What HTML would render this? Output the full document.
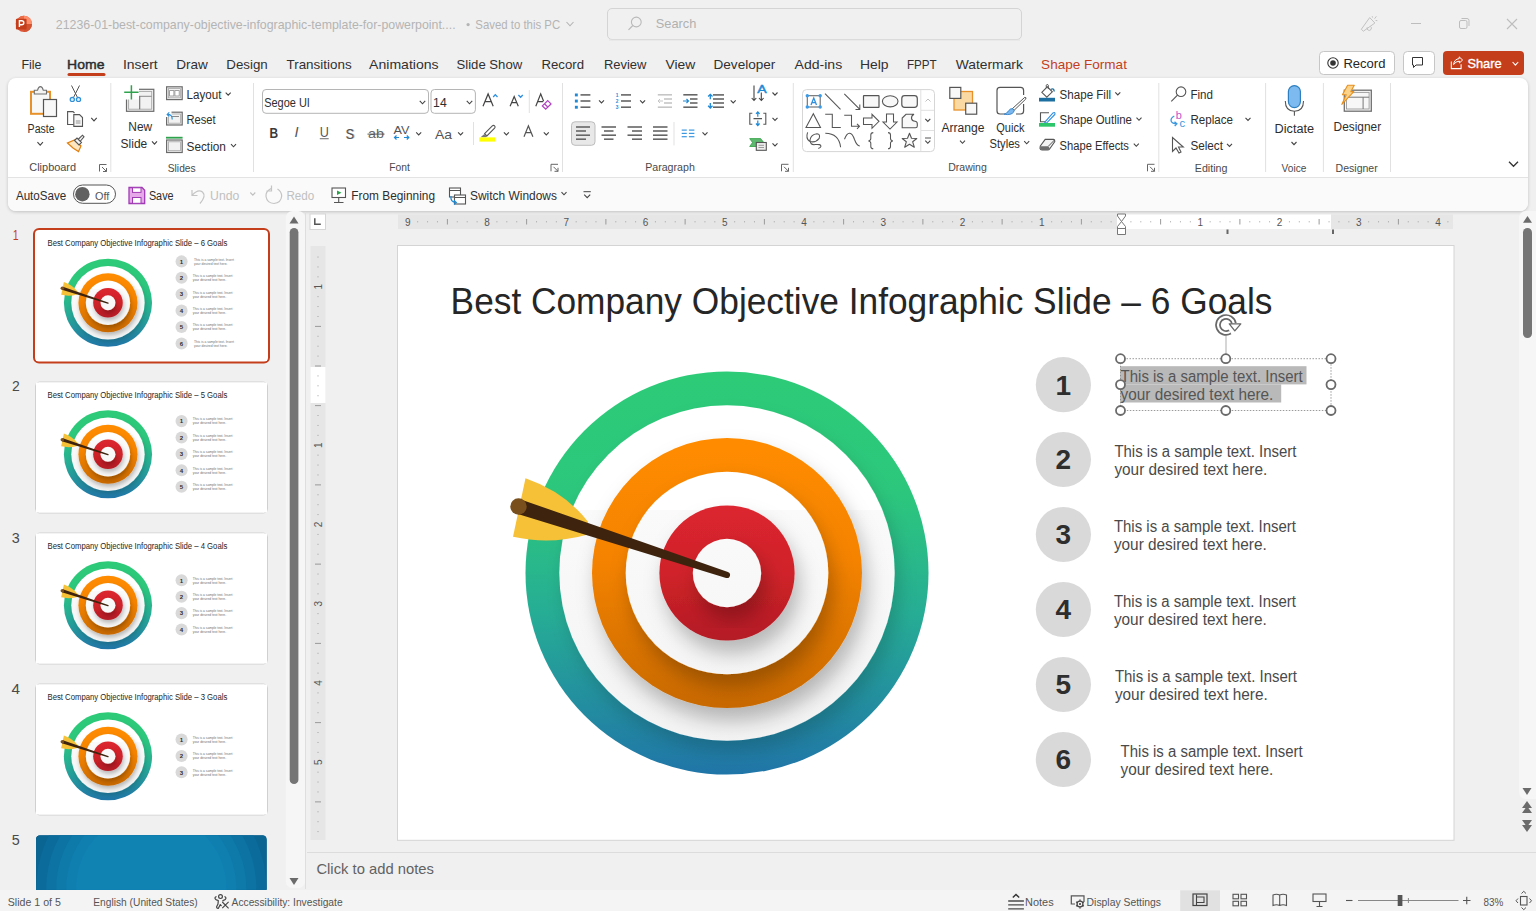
<!DOCTYPE html>
<html><head><meta charset="utf-8">
<style>
*{margin:0;padding:0;box-sizing:border-box}
html,body{width:1536px;height:911px;overflow:hidden;background:#f0f0f0;font-family:"Liberation Sans", sans-serif;color:#262626}
.a{position:absolute}
svg.full{position:absolute;left:0;top:0}
text{font-family:"Liberation Sans", sans-serif}
</style></head><body>
<div class="a" style="left:8px;top:78px;width:1520px;height:133px;border-radius:8px;background:#fff;box-shadow:0 1px 3.5px rgba(0,0,0,0.2)"></div>
<div class="a" style="left:8px;top:177px;width:1520px;height:34px;border-radius:0 0 8px 8px;background:#fafafa;border-top:1px solid #e3e3e3"></div>
<svg class="full" width="1536" height="911" viewBox="0 0 1536 911">
<g>
  <circle cx="23.9" cy="23.9" r="8.1" fill="#e0583a"/>
  <path d="M23.9 15.8 A8.1 8.1 0 0 1 32 23.9 L23.9 23.9Z" fill="#ff8f6b"/>
  <path d="M23.9 23.9 L32 23.9 A8.1 8.1 0 0 1 23.9 32Z" fill="#d35230"/>
  <path d="M23.9 15.8 A8.1 8.1 0 0 0 15.8 23.9 L23.9 23.9Z" fill="#ed6c47"/>
  <rect x="15.9" y="18.7" width="10.7" height="10.7" rx="1" fill="#c43e1c"/>
  <path d="M19.4 27 V20.8 H21.6 Q23.8 20.8 23.8 22.8 Q23.8 24.8 21.6 24.8 H19.4" fill="none" stroke="#fff" stroke-width="1.4"/>
</g>
<text x="55.85" y="28.6" font-size="12.2" fill="#b4b4b4" font-weight="normal" textLength="399.75" lengthAdjust="spacingAndGlyphs" >21236-01-best-company-objective-infographic-template-for-powerpoint....</text>
<circle cx="468.1" cy="24.6" r="1.6" fill="#b4b4b4"/>
<text x="475.30" y="28.6" font-size="12.2" fill="#b4b4b4" font-weight="normal" textLength="84.90" lengthAdjust="spacingAndGlyphs" >Saved to this PC</text>
<path d="M566.50 22.00 L570.00 25.80 L573.50 22.00" fill="none" stroke="#b4b4b4" stroke-width="1.1"/>
<rect x="607.5" y="8.5" width="414" height="31" rx="4.5" fill="#f0f0f0" stroke="#d4d4d4" stroke-width="1"/>
<line x1="609" y1="40" x2="1020" y2="40" stroke="#e2e2e2" stroke-width="1"/>
<circle cx="636.3" cy="22" r="4.9" fill="none" stroke="#b9b9b9" stroke-width="1.1"/><path d="M632.8 25.5 L628.5 29.8" stroke="#b9b9b9" stroke-width="1.2"/>
<text x="655.80" y="27.7" font-size="13.6" fill="#b0b0b0" font-weight="normal" textLength="40.60" lengthAdjust="spacingAndGlyphs" >Search</text>
<path d="M1369.7 17.6 L1374.9 23 L1363.4 31.2 L1361.3 29.3 Z" fill="none" stroke="#c2c2c2" stroke-width="1" stroke-linejoin="round"/><path d="M1367.2 27.3 A2.2 2.2 0 1 0 1370.6 26.5" fill="none" stroke="#c2c2c2" stroke-width="1"/><path d="M1372.2 16.2 L1372.6 17.6 M1374.6 18.7 L1376.4 16.3 M1375.6 20.5 L1377.3 20.6" stroke="#c2c2c2" stroke-width="1"/>
<line x1="1411" y1="23.5" x2="1421" y2="23.5" stroke="#bdbdbd" stroke-width="1"/>
<rect x="1459.5" y="20.5" width="7.5" height="8" rx="1.5" fill="none" stroke="#bdbdbd"/><path d="M1461.5 18.5 H1467 A2 2 0 0 1 1469 20.5 V26" fill="none" stroke="#bdbdbd"/>
<path d="M1507 19 L1517 29 M1517 19 L1507 29" stroke="#bdbdbd" stroke-width="1.1"/>
<text x="21.40" y="68.8" font-size="13.2" fill="#303030" font-weight="normal" textLength="20.10" lengthAdjust="spacingAndGlyphs" >File</text>
<text x="67.10" y="68.8" font-size="13.2" fill="#303030" font-weight="normal" textLength="37.40" lengthAdjust="spacingAndGlyphs" stroke="#2a2a2a" stroke-width="0.45">Home</text>
<text x="123.00" y="68.8" font-size="13.2" fill="#303030" font-weight="normal" textLength="34.70" lengthAdjust="spacingAndGlyphs" >Insert</text>
<text x="176.20" y="68.8" font-size="13.2" fill="#303030" font-weight="normal" textLength="31.60" lengthAdjust="spacingAndGlyphs" >Draw</text>
<text x="226.30" y="68.8" font-size="13.2" fill="#303030" font-weight="normal" textLength="41.40" lengthAdjust="spacingAndGlyphs" >Design</text>
<text x="286.50" y="68.8" font-size="13.2" fill="#303030" font-weight="normal" textLength="65.10" lengthAdjust="spacingAndGlyphs" >Transitions</text>
<text x="369.10" y="68.8" font-size="13.2" fill="#303030" font-weight="normal" textLength="69.50" lengthAdjust="spacingAndGlyphs" >Animations</text>
<text x="456.50" y="68.8" font-size="13.2" fill="#303030" font-weight="normal" textLength="65.70" lengthAdjust="spacingAndGlyphs" >Slide Show</text>
<text x="541.50" y="68.8" font-size="13.2" fill="#303030" font-weight="normal" textLength="42.50" lengthAdjust="spacingAndGlyphs" >Record</text>
<text x="603.90" y="68.8" font-size="13.2" fill="#303030" font-weight="normal" textLength="42.50" lengthAdjust="spacingAndGlyphs" >Review</text>
<text x="665.40" y="68.8" font-size="13.2" fill="#303030" font-weight="normal" textLength="29.80" lengthAdjust="spacingAndGlyphs" >View</text>
<text x="713.50" y="68.8" font-size="13.2" fill="#303030" font-weight="normal" textLength="61.90" lengthAdjust="spacingAndGlyphs" >Developer</text>
<text x="794.50" y="68.8" font-size="13.2" fill="#303030" font-weight="normal" textLength="47.70" lengthAdjust="spacingAndGlyphs" >Add-ins</text>
<text x="860.00" y="68.8" font-size="13.2" fill="#303030" font-weight="normal" textLength="28.60" lengthAdjust="spacingAndGlyphs" >Help</text>
<text x="906.90" y="68.8" font-size="13.2" fill="#303030" font-weight="normal" textLength="29.80" lengthAdjust="spacingAndGlyphs" >FPPT</text>
<text x="955.70" y="68.8" font-size="13.2" fill="#303030" font-weight="normal" textLength="67.20" lengthAdjust="spacingAndGlyphs" >Watermark</text>
<text x="1041.10" y="68.8" font-size="13.2" fill="#c43e1c" font-weight="normal" textLength="85.80" lengthAdjust="spacingAndGlyphs" >Shape Format</text>
<rect x="67.5" y="73" width="38" height="3" rx="1.5" fill="#c43e1c"/>
<rect x="1319.5" y="51.5" width="75" height="23" rx="4" fill="#fff" stroke="#c6c6c6"/>
<circle cx="1333" cy="63" r="5.2" fill="none" stroke="#333" stroke-width="1.1"/><circle cx="1333" cy="63" r="2.8" fill="#333"/>
<text x="1343.40" y="67.7" font-size="13.2" fill="#262626" font-weight="normal" textLength="42.00" lengthAdjust="spacingAndGlyphs" >Record</text>
<rect x="1403.5" y="51.5" width="31" height="23" rx="4" fill="#fff" stroke="#c6c6c6"/>
<path d="M1412.5 57.5 H1422.5 V65 H1416 L1413.5 67.5 V65 H1412.5 Z" fill="none" stroke="#333" stroke-width="1"/>
<rect x="1443" y="51" width="81" height="24" rx="4" fill="#c43e1c"/>
<path d="M1451.3 61.5 V68.6 H1461.1 V64.3" fill="none" stroke="#fff" stroke-width="1.05"/><path d="M1453.6 64.6 Q1454.2 59.2 1459.2 58.6 V56.9 L1462.6 60 L1459.4 63 V61.1 Q1455.8 61.2 1453.6 64.6 Z" fill="none" stroke="#fff" stroke-width="1" stroke-linejoin="round"/>
<text x="1467.40" y="67.8" font-size="13.4" fill="#fff" font-weight="normal" textLength="34.20" lengthAdjust="spacingAndGlyphs" stroke="#fff" stroke-width="0.35">Share</text>
<path d="M1512.60 62.00 L1515.40 65.20 L1518.20 62.00" fill="none" stroke="#fff" stroke-width="1.1"/>
<line x1="110.8" y1="83" x2="110.8" y2="172" stroke="#e1e1e1" stroke-width="1"/>
<line x1="253.5" y1="83" x2="253.5" y2="172" stroke="#e1e1e1" stroke-width="1"/>
<line x1="562.5" y1="83" x2="562.5" y2="172" stroke="#e1e1e1" stroke-width="1"/>
<line x1="793.3" y1="83" x2="793.3" y2="172" stroke="#e1e1e1" stroke-width="1"/>
<line x1="1158.8" y1="83" x2="1158.8" y2="172" stroke="#e1e1e1" stroke-width="1"/>
<line x1="1265.6" y1="83" x2="1265.6" y2="172" stroke="#e1e1e1" stroke-width="1"/>
<line x1="1323.4" y1="83" x2="1323.4" y2="172" stroke="#e1e1e1" stroke-width="1"/>
<line x1="1390.5" y1="83" x2="1390.5" y2="172" stroke="#e1e1e1" stroke-width="1"/>
<rect x="31" y="91.8" width="19" height="22" fill="#f8f8f8" stroke="#e8912a" stroke-width="2"/>
<path d="M34.3 94 V90.3 H37.5 Q38.5 86.6 40.4 86.6 Q42.3 86.6 43.3 90.3 H46.5 V94 Z" fill="#f4f4f4" stroke="#707070" stroke-width="1.1"/>
<rect x="43.5" y="99.5" width="13" height="17" fill="#f8f8f8" stroke="#555" stroke-width="1.2"/>
<text x="27.60" y="133.3" font-size="12.3" fill="#2e2e2e" font-weight="normal" textLength="27.00" lengthAdjust="spacingAndGlyphs" >Paste</text>
<path d="M37.45 142.10 L40.20 145.10 L42.95 142.10" fill="none" stroke="#444" stroke-width="1.1"/>
<path d="M71.5 85.5 L77.5 97.5 M79.5 85.5 L73.5 97.5" stroke="#555" stroke-width="1"/><circle cx="72.3" cy="99.4" r="2.1" fill="#d7ecfa" stroke="#2f8fd8" stroke-width="1.2"/><circle cx="78.5" cy="99.4" r="2.1" fill="#d7ecfa" stroke="#2f8fd8" stroke-width="1.2"/>
<path d="M73.7 124.5 H67.6 V111.6 H73 L74.5 113" fill="none" stroke="#555" stroke-width="1.1"/><path d="M73.8 114.6 H79.5 L82.5 117.6 V126.4 H73.8 Z" fill="#f8f8f8" stroke="#555" stroke-width="1.1"/><path d="M75.8 121 H80.5 M75.8 123 H80.5" stroke="#777" stroke-width="0.8"/>
<path d="M91.25 117.90 L94.00 120.90 L96.75 117.90" fill="none" stroke="#444" stroke-width="1.1"/>
<path d="M67.5 143 L73 148 L78.5 151.5 L81 146 L74.5 140 Z" fill="#fde6c0" stroke="#e07f0f" stroke-width="1.2"/><path d="M74.5 140.5 L77 138 L81.5 142.5 L79 145 Z M78.5 139 L82.5 135.2 L84 136.8 L80.5 141" fill="#f4f4f4" stroke="#555" stroke-width="1.1"/>
<text x="29.30" y="171.4" font-size="11" fill="#4a4a4a" font-weight="normal" textLength="46.80" lengthAdjust="spacingAndGlyphs" >Clipboard</text>
<path d="M99.5 171.5 V164.5 H106.5" fill="none" stroke="#666" stroke-width="1"/><path d="M102.0 167.0 L106.5 171.5 M103.0 171.5 H106.5 V168.0" fill="none" stroke="#666" stroke-width="1"/>
<rect x="126.5" y="89.3" width="27.3" height="22" fill="#f2f2f2" stroke="#6b6b6b" stroke-width="1.2"/><rect x="128.6" y="91.4" width="23.1" height="17.8" fill="none" stroke="#a6a6a6" stroke-width="0.9"/><path d="M128.6 96.3 H151.7" stroke="#8a8a8a" stroke-width="1"/><path d="M139.7 96.3 V109.2" stroke="#6b6b6b" stroke-width="1.1"/>
<rect x="123" y="84" width="16" height="15.5" fill="#fff"/><path d="M124.2 92.3 H138.6 M131.4 85.2 V99.5" stroke="#2ea24c" stroke-width="1.5"/>
<text x="128.30" y="131.2" font-size="12.3" fill="#2e2e2e" font-weight="normal" textLength="23.80" lengthAdjust="spacingAndGlyphs" >New</text>
<text x="120.60" y="147.7" font-size="12.3" fill="#2e2e2e" font-weight="normal" textLength="26.60" lengthAdjust="spacingAndGlyphs" >Slide</text>
<path d="M152.00 141.40 L154.50 144.20 L157.00 141.40" fill="none" stroke="#444" stroke-width="1.1"/>
<rect x="166.6" y="86.8" width="15.6" height="12.8" fill="#f2f2f2" stroke="#6b6b6b" stroke-width="1.2"/><rect x="168.4" y="88.6" width="12" height="9.2" fill="none" stroke="#a6a6a6" stroke-width="0.8"/><rect x="169.6" y="90.6" width="4.3" height="5.4" fill="#fff" stroke="#8a8a8a" stroke-width="0.8"/><rect x="174.9" y="90.6" width="4.3" height="5.4" fill="#fff" stroke="#8a8a8a" stroke-width="0.8"/>
<text x="186.50" y="98.8" font-size="12.3" fill="#2e2e2e" font-weight="normal" textLength="34.90" lengthAdjust="spacingAndGlyphs" >Layout</text>
<path d="M225.70 92.60 L228.20 95.20 L230.70 92.60" fill="none" stroke="#444" stroke-width="1.1"/>
<rect x="166.6" y="112.2" width="15.6" height="12.8" fill="#f2f2f2" stroke="#6b6b6b" stroke-width="1.2"/><rect x="168.4" y="114" width="12" height="9.2" fill="none" stroke="#a6a6a6" stroke-width="0.8"/><path d="M172 116.5 H179" stroke="#8a8a8a" stroke-width="1"/>
<rect x="165" y="110" width="6.5" height="7" fill="#fff"/><path d="M172.2 119.4 Q172.4 114.2 167.3 114.4 M169.3 112.3 L167.2 114.4 L169.3 116.5" fill="none" stroke="#2f8fd8" stroke-width="1.2"/>
<text x="186.50" y="124.1" font-size="12.3" fill="#2e2e2e" font-weight="normal" textLength="29.10" lengthAdjust="spacingAndGlyphs" >Reset</text>
<rect x="166.6" y="140" width="15.6" height="12.5" fill="#f2f2f2" stroke="#6b6b6b" stroke-width="1.2"/><rect x="168.4" y="141.8" width="12" height="8.9" fill="none" stroke="#a6a6a6" stroke-width="0.8"/><rect x="166" y="136.8" width="16.6" height="1.8" fill="#2ea24c"/>
<text x="186.50" y="150.5" font-size="12.3" fill="#2e2e2e" font-weight="normal" textLength="39.40" lengthAdjust="spacingAndGlyphs" >Section</text>
<path d="M231.00 144.20 L233.50 146.80 L236.00 144.20" fill="none" stroke="#444" stroke-width="1.1"/>
<text x="167.80" y="171.7" font-size="11" fill="#4a4a4a" font-weight="normal" textLength="27.80" lengthAdjust="spacingAndGlyphs" >Slides</text>
<rect x="262.5" y="89.5" width="166" height="23.8" rx="3.5" fill="#fff" stroke="#b5b5b5" stroke-width="1"/>
<text x="264.20" y="107.2" font-size="12.3" fill="#2e2e2e" font-weight="normal" textLength="45.70" lengthAdjust="spacingAndGlyphs" >Segoe UI</text>
<path d="M419.75 100.80 L422.50 103.80 L425.25 100.80" fill="none" stroke="#444" stroke-width="1.1"/>
<rect x="431" y="89.5" width="44.4" height="23.8" rx="3.5" fill="#fff" stroke="#b5b5b5" stroke-width="1"/>
<text x="433.10" y="107.2" font-size="12.3" fill="#2e2e2e" font-weight="normal" textLength="13.60" lengthAdjust="spacingAndGlyphs" >14</text>
<path d="M466.75 100.80 L469.50 103.80 L472.25 100.80" fill="none" stroke="#444" stroke-width="1.1"/>
<path d="M483 106.3 L488.1 93.9 L493.2 106.3 M484.9 101.6 H491.3" fill="none" stroke="#444" stroke-width="1.2"/><path d="M493.2 97 L495.3 94.6 L497.5 97" fill="none" stroke="#2f8fe0" stroke-width="1.3"/>
<path d="M510.1 106.3 L514.2 96.5 L518.3 106.3 M511.6 102.7 H516.8" fill="none" stroke="#444" stroke-width="1.2"/><path d="M518.4 95 L520.6 97.3 L522.8 95" fill="none" stroke="#2f8fe0" stroke-width="1.3"/>
<line x1="529.3" y1="90" x2="529.3" y2="113" stroke="#e1e1e1" stroke-width="1"/>
<path d="M535.8 106.3 L540.7 93.9 L543.6 101.3 M537.6 101.7 H543.2" fill="none" stroke="#444" stroke-width="1.2"/><path d="M542.4 105.9 L547.7 100.6 L551 103.9 L545.7 109.2 Z M544.5 103.8 L547.8 107.1" fill="#fff" stroke="#b146c2" stroke-width="1.3"/>
<text x="269.40" y="137.6" font-size="14.2" fill="#3a3a3a" font-weight="bold" textLength="8.60" lengthAdjust="spacingAndGlyphs" >B</text>
<text x="294.5" y="137.3" font-size="14.5" fill="#555" font-style="italic" font-family="Liberation Serif">I</text>
<text x="319.70" y="137.3" font-size="13.8" fill="#555" font-weight="normal" textLength="9.10" lengthAdjust="spacingAndGlyphs" >U</text>
<line x1="319.8" y1="138.7" x2="328.7" y2="138.7" stroke="#777" stroke-width="1.1"/>
<text x="346.40" y="139.1" font-size="14.5" fill="#bbb" font-weight="normal" textLength="8.60" lengthAdjust="spacingAndGlyphs" >S</text>
<text x="345.60" y="138.5" font-size="14.5" fill="#555" font-weight="normal" textLength="8.60" lengthAdjust="spacingAndGlyphs" >S</text>
<text x="367.90" y="138.3" font-size="13.2" fill="#666" font-weight="normal" textLength="16.00" lengthAdjust="spacingAndGlyphs" >ab</text>
<line x1="367.5" y1="134.1" x2="384.5" y2="134.1" stroke="#555" stroke-width="1"/>
<text x="393.40" y="134.2" font-size="11.8" fill="#555" font-weight="normal" textLength="16.00" lengthAdjust="spacingAndGlyphs" >AV</text>
<path d="M394.5 137.5 H399 M404 137.5 H408.8 M396.5 135.5 L394.5 137.5 L396.5 139.5 M406.8 135.5 L408.8 137.5 L406.8 139.5" fill="none" stroke="#1e8ad6" stroke-width="1.2"/>
<path d="M416.20 132.30 L418.70 134.90 L421.20 132.30" fill="none" stroke="#444" stroke-width="1.1"/>
<text x="435.00" y="138.5" font-size="13.5" fill="#555" font-weight="normal" textLength="17.10" lengthAdjust="spacingAndGlyphs" >Aa</text>
<path d="M458.10 132.30 L460.60 134.90 L463.10 132.30" fill="none" stroke="#444" stroke-width="1.1"/>
<line x1="473.5" y1="122" x2="473.5" y2="145" stroke="#e1e1e1" stroke-width="1"/>
<path d="M484.6 133.6 L492.3 125.9 Q493.5 124.8 494.6 125.9 Q495.7 127 494.6 128.2 L486.9 135.9 Z" fill="#fff" stroke="#555" stroke-width="1.1"/><path d="M484.3 133.9 L487.2 136.2 L485.6 137.3 H480.6 Z" fill="#777"/>
<rect x="479.3" y="137.4" width="15.8" height="4.2" fill="#ffff00"/>
<path d="M503.90 132.30 L506.40 134.90 L508.90 132.30" fill="none" stroke="#444" stroke-width="1.1"/>
<path d="M524 136.8 L528.4 125.9 L532.9 136.8 M525.6 132.7 H531.2" fill="none" stroke="#555" stroke-width="1.2"/>
<path d="M543.80 132.30 L546.30 134.90 L548.80 132.30" fill="none" stroke="#444" stroke-width="1.1"/>
<text x="389.20" y="171.1" font-size="11" fill="#4a4a4a" font-weight="normal" textLength="20.60" lengthAdjust="spacingAndGlyphs" >Font</text>
<path d="M551 171.3 V164.3 H558" fill="none" stroke="#666" stroke-width="1"/><path d="M553.5 166.8 L558 171.3 M554.5 171.3 H558 V167.8" fill="none" stroke="#666" stroke-width="1"/>
<g fill="#1e8ad6"><rect x="574.9" y="93.5" width="2.9" height="2.9"/><rect x="574.9" y="99.6" width="2.9" height="2.9"/><rect x="574.9" y="105.8" width="2.9" height="2.9"/></g>
<line x1="580.5" y1="94.9" x2="590.4" y2="94.9" stroke="#666" stroke-width="1.6"/><line x1="580.5" y1="101" x2="590.4" y2="101" stroke="#666" stroke-width="1.6"/><line x1="580.5" y1="107.2" x2="590.4" y2="107.2" stroke="#666" stroke-width="1.6"/>
<path d="M599.00 100.30 L601.50 102.90 L604.00 100.30" fill="none" stroke="#444" stroke-width="1.1"/>
<g font-size="4.8" fill="#1e8ad6" font-weight="bold"><text x="615.8" y="97">1</text><text x="615.8" y="103">2</text><text x="615.8" y="109">3</text></g>
<line x1="621" y1="94.9" x2="631" y2="94.9" stroke="#666" stroke-width="1.6"/><line x1="621" y1="101" x2="631" y2="101" stroke="#666" stroke-width="1.6"/><line x1="621" y1="107.2" x2="631" y2="107.2" stroke="#666" stroke-width="1.6"/>
<path d="M640.10 100.30 L642.60 102.90 L645.10 100.30" fill="none" stroke="#444" stroke-width="1.1"/>
<line x1="657.8" y1="94.8" x2="672" y2="94.8" stroke="#c6c6c6" stroke-width="1.6"/><line x1="657.8" y1="107.2" x2="672" y2="107.2" stroke="#c6c6c6" stroke-width="1.6"/><line x1="664" y1="99" x2="672" y2="99" stroke="#c6c6c6" stroke-width="1.6"/><line x1="664" y1="103" x2="672" y2="103" stroke="#c6c6c6" stroke-width="1.6"/>
<path d="M663 101 H658 M660 99 L658 101 L660 103" fill="none" stroke="#c6c6c6" stroke-width="1"/>
<line x1="683.3" y1="94.8" x2="697.5" y2="94.8" stroke="#666" stroke-width="1.6"/><line x1="683.3" y1="107.2" x2="697.5" y2="107.2" stroke="#666" stroke-width="1.6"/><line x1="690" y1="99" x2="697.5" y2="99" stroke="#666" stroke-width="1.6"/><line x1="690" y1="103" x2="697.5" y2="103" stroke="#666" stroke-width="1.6"/>
<path d="M683 101 H688.5 M686.5 99 L688.5 101 L686.5 103" fill="none" stroke="#1e8ad6" stroke-width="1.2"/>
<line x1="713" y1="94.9" x2="724" y2="94.9" stroke="#666" stroke-width="1.6"/><line x1="713" y1="99" x2="724" y2="99" stroke="#666" stroke-width="1.6"/><line x1="713" y1="103" x2="724" y2="103" stroke="#666" stroke-width="1.6"/><line x1="713" y1="107.2" x2="724" y2="107.2" stroke="#666" stroke-width="1.6"/>
<path d="M710.3 94.3 V99.3 M710.3 103 V108 M708.1 96.5 L710.3 94.3 L712.5 96.5 M708.1 105.8 L710.3 108 L712.5 105.8" fill="none" stroke="#1e8ad6" stroke-width="1.3"/>
<path d="M730.70 100.30 L733.20 102.90 L735.70 100.30" fill="none" stroke="#444" stroke-width="1.1"/>
<path d="M754 85.5 V100.5 M751.7 98 L754 100.5 L756.3 98 M761.3 92.5 V100.5 M759 98 L761.3 100.5 L763.6 98" fill="none" stroke="#444" stroke-width="1.1"/>
<text x="757.20" y="92.8" font-size="10" fill="#1e8ad6" font-weight="normal" textLength="9.40" lengthAdjust="spacingAndGlyphs" stroke="#1e8ad6" stroke-width="0.4">A</text>
<path d="M772.50 92.50 L775.00 95.10 L777.50 92.50" fill="none" stroke="#444" stroke-width="1.1"/>
<path d="M752.3 113.2 H749.8 V124.3 H752.3 M763.3 113.2 H765.8 V124.3 H763.3 M753.5 118.6 H762" fill="none" stroke="#555" stroke-width="1.1"/><path d="M757.8 111.8 V116.8 M757.8 120.4 V125.5 M756 113.8 L757.8 111.8 L759.6 113.8 M756 123.5 L757.8 125.5 L759.6 123.5" fill="none" stroke="#1e8ad6" stroke-width="1.2"/>
<path d="M772.50 117.80 L775.00 120.40 L777.50 117.80" fill="none" stroke="#444" stroke-width="1.1"/>
<path d="M749.7 138.6 H760.6 L764 142.8 L760.6 146.5 H749.7 L752.5 142.5 Z" fill="#5fb86f" stroke="#2ea043" stroke-width="0.8"/><rect x="756.3" y="142.5" width="10" height="7.8" fill="#eee" stroke="#555" stroke-width="1.1"/><path d="M758.5 145.3 H764 M758.5 147.5 H764" stroke="#777" stroke-width="0.7"/>
<path d="M772.50 143.40 L775.00 146.00 L777.50 143.40" fill="none" stroke="#444" stroke-width="1.1"/>
<rect x="571.5" y="121.8" width="23.5" height="23.5" rx="3.5" fill="#e8e8e8" stroke="#bdbdbd" stroke-width="1"/>
<line x1="576" y1="127" x2="590" y2="127" stroke="#666" stroke-width="1.6"/><line x1="576" y1="135.2" x2="590" y2="135.2" stroke="#666" stroke-width="1.6"/><line x1="576" y1="131" x2="586" y2="131" stroke="#666" stroke-width="1.6"/><line x1="576" y1="139.2" x2="586" y2="139.2" stroke="#666" stroke-width="1.6"/>
<line x1="601.5" y1="127" x2="616" y2="127" stroke="#666" stroke-width="1.6"/><line x1="601.5" y1="135.2" x2="616" y2="135.2" stroke="#666" stroke-width="1.6"/><line x1="604" y1="131" x2="613.5" y2="131" stroke="#666" stroke-width="1.6"/><line x1="604" y1="139.2" x2="613.5" y2="139.2" stroke="#666" stroke-width="1.6"/>
<line x1="627.5" y1="127" x2="642" y2="127" stroke="#666" stroke-width="1.6"/><line x1="627.5" y1="135.2" x2="642" y2="135.2" stroke="#666" stroke-width="1.6"/><line x1="632" y1="131" x2="642" y2="131" stroke="#666" stroke-width="1.6"/><line x1="632" y1="139.2" x2="642" y2="139.2" stroke="#666" stroke-width="1.6"/>
<line x1="653" y1="127" x2="667.5" y2="127" stroke="#666" stroke-width="1.6"/><line x1="653" y1="131" x2="667.5" y2="131" stroke="#666" stroke-width="1.6"/><line x1="653" y1="135.2" x2="667.5" y2="135.2" stroke="#666" stroke-width="1.6"/><line x1="653" y1="139.2" x2="667.5" y2="139.2" stroke="#666" stroke-width="1.6"/>
<line x1="674" y1="122" x2="674" y2="145.5" stroke="#e1e1e1" stroke-width="1"/>
<line x1="681.7" y1="130.1" x2="686.8" y2="130.1" stroke="#3a98e0" stroke-width="1.2"/><line x1="681.7" y1="133.4" x2="686.8" y2="133.4" stroke="#3a98e0" stroke-width="1.2"/><line x1="681.7" y1="136.7" x2="686.8" y2="136.7" stroke="#3a98e0" stroke-width="1.2"/><line x1="688.9" y1="130.1" x2="694.4" y2="130.1" stroke="#3a98e0" stroke-width="1.2"/><line x1="688.9" y1="133.4" x2="694.4" y2="133.4" stroke="#3a98e0" stroke-width="1.2"/><line x1="688.9" y1="136.7" x2="694.4" y2="136.7" stroke="#3a98e0" stroke-width="1.2"/>
<path d="M702.50 132.30 L705.00 134.90 L707.50 132.30" fill="none" stroke="#444" stroke-width="1.1"/>
<text x="645.20" y="171.1" font-size="11" fill="#4a4a4a" font-weight="normal" textLength="49.60" lengthAdjust="spacingAndGlyphs" >Paragraph</text>
<path d="M781.5 171.3 V164.3 H788.5" fill="none" stroke="#666" stroke-width="1"/><path d="M784.0 166.8 L788.5 171.3 M785.0 171.3 H788.5 V167.8" fill="none" stroke="#666" stroke-width="1"/>
<rect x="802.5" y="89.6" width="132" height="62" rx="4" fill="#fff" stroke="#d6d6d6" stroke-width="1"/>
<line x1="920.8" y1="90" x2="920.8" y2="151" stroke="#e0e0e0"/><line x1="921" y1="110.3" x2="934" y2="110.3" stroke="#e0e0e0"/><line x1="921" y1="130.5" x2="934" y2="130.5" stroke="#e0e0e0"/>
<path d="M925.5 101.5 L928 99 L930.5 101.5" fill="none" stroke="#c0c0c0" stroke-width="1"/>
<path d="M925.30 118.90 L927.80 121.50 L930.30 118.90" fill="none" stroke="#444" stroke-width="1.1"/>
<path d="M925 138 H931" stroke="#555" stroke-width="1"/><path d="M925.30 140.70 L927.80 143.30 L930.30 140.70" fill="none" stroke="#444" stroke-width="1.1"/>
<rect x="807.3" y="95.7" width="12.9" height="11.3" fill="#fff" stroke="#6a6a6a" stroke-width="1.1"/>
<g fill="#3a9be8"><circle cx="807.3" cy="95.7" r="1.7"/><circle cx="820.2" cy="95.7" r="1.7"/><circle cx="807.3" cy="107" r="1.7"/><circle cx="820.2" cy="107" r="1.7"/></g>
<path d="M811 105 L813.75 98 L816.5 105 M812 102.7 H815.5" fill="none" stroke="#2f8fe0" stroke-width="1.3"/>
<path d="M825 93.7 L840.5 109.3" fill="none" stroke="#555" stroke-width="1.05"/><path d="M844.3 93.8 L859.6 109.2 M859.8 104.5 V109.4 H855.5" fill="none" stroke="#555" stroke-width="1.05"/>
<rect x="863.5" y="95.6" width="15.5" height="11.8" rx="0.5" fill="#f8f8f8" stroke="#555" stroke-width="1.2"/><ellipse cx="890.2" cy="101.3" rx="7.8" ry="5.6" fill="#f8f8f8" stroke="#555" stroke-width="1.1"/><rect x="901.8" y="95.6" width="15.5" height="11.8" rx="2.8" fill="#f8f8f8" stroke="#555" stroke-width="1.2"/>
<path d="M813.3 113.7 L806 127.5 H820.5 Z" fill="none" stroke="#555" stroke-width="1.05"/><path d="M825.2 114.3 H832.3 V127.5 H840.8" fill="none" stroke="#555" stroke-width="1.05"/><path d="M844.2 115.3 H851.5 V126.3 H859.5 M857 123.8 L859.5 126.3 L857 128.8" fill="none" stroke="#555" stroke-width="1.05"/>
<path d="M863.5 118 H872 V114.3 L879 121.3 L872 128.3 V124.5 H863.5 Z" fill="none" stroke="#555" stroke-width="1.05"/><path d="M886.5 114 H893.5 V122 H897 L890 129 L883 122 H886.5 Z" fill="none" stroke="#555" stroke-width="1.05"/><path d="M902.2 127.8 V118 L906 114.3 H914 Q911.4 115.6 911.5 118.3 Q912 121 915 121.2 Q917.3 121.5 917.3 123.7 V126 Q917.3 127.8 915.5 127.8 Z" fill="#f8f8f8" stroke="#555" stroke-width="1.1"/>
<path d="M807.6 132.3 Q805.5 138.5 809.5 141.2 Q815 143.5 819.2 138.3 Q820.5 134 817 133.8 Q811 134.5 810 140 Q810 145.2 815 144.6 Q820.8 143.8 821 146.3 Q820.8 147.8 818.3 148.6" fill="none" stroke="#555" stroke-width="1.05"/><path d="M825.3 133.3 Q839 133.5 840.6 147.2" fill="none" stroke="#555" stroke-width="1.05"/><path d="M844.5 139.3 Q846.8 133 849.7 133.3 Q852.5 133.6 854.5 139.5 Q856.8 145.7 859.8 146" fill="none" stroke="#555" stroke-width="1.05"/>
<path d="M873.3 132.6 Q870.8 132.6 870.8 135 V138.6 Q870.8 140.6 868.4 140.9 Q870.8 141.2 870.8 143.2 V146.5 Q870.8 148.8 873.3 148.8" fill="none" stroke="#555" stroke-width="1.05"/>
<path d="M888 132.6 Q890.5 132.6 890.5 135 V138.6 Q890.5 140.6 892.9 140.9 Q890.5 141.2 890.5 143.2 V146.5 Q890.5 148.8 888 148.8" fill="none" stroke="#555" stroke-width="1.05"/>
<path d="M909.5 133.2 L911.5 138.3 L916.8 138.5 L912.7 141.8 L914.3 147.2 L909.5 144.2 L904.7 147.2 L906.3 141.8 L902.2 138.5 L907.5 138.3 Z" fill="#f8f8f8" stroke="#555" stroke-width="1.1" stroke-linejoin="round"/>
<rect x="954" y="91.5" width="18.5" height="18.5" fill="#fbd9a3" stroke="#e8912a" stroke-width="1.3"/><rect x="949.8" y="87.4" width="11" height="11" fill="#f8f8f8" stroke="#555" stroke-width="1.2"/><rect x="965.7" y="103.2" width="11" height="11" fill="#f8f8f8" stroke="#555" stroke-width="1.2"/>
<text x="941.40" y="131.5" font-size="12.3" fill="#2e2e2e" font-weight="normal" textLength="43.00" lengthAdjust="spacingAndGlyphs" >Arrange</text>
<path d="M960.00 140.70 L962.50 143.30 L965.00 140.70" fill="none" stroke="#444" stroke-width="1.1"/>
<path d="M1005 114 H1000 Q997 114 997 111 V90.4 Q997 87.4 1000 87.4 H1020.6 Q1023.6 87.4 1023.6 90.4 V95 M1023.6 104 V111 Q1023.6 114 1020.6 114 H1016" fill="none" stroke="#555" stroke-width="1.2"/>
<path d="M1024.8 97.3 Q1026.5 97.2 1025.8 99 L1013.8 110.6 L1012 109 Z" fill="#fff" stroke="#555" stroke-width="1"/>
<path d="M1004.2 114.2 Q1007 113.6 1008.5 110.8 Q1010.5 108 1013 108.8 Q1015 110.3 1013.6 112.2 Q1011 115.5 1004.2 114.2 Z" fill="#7bb8ef" stroke="#2f7fc8" stroke-width="0.9"/>
<text x="996.30" y="131.5" font-size="12.3" fill="#2e2e2e" font-weight="normal" textLength="28.10" lengthAdjust="spacingAndGlyphs" >Quick</text>
<text x="989.60" y="147.5" font-size="12.3" fill="#2e2e2e" font-weight="normal" textLength="30.30" lengthAdjust="spacingAndGlyphs" >Styles</text>
<path d="M1024.20 141.20 L1026.70 143.80 L1029.20 141.20" fill="none" stroke="#444" stroke-width="1.1"/>
<path d="M1041.8 92.3 L1047.3 86.8 L1052.3 91.8 L1046.8 97.2 Z" fill="#fff" stroke="#555" stroke-width="1.1"/><path d="M1046.3 87.8 V85.2 Q1047.3 83.2 1048.3 85.2 V89" fill="none" stroke="#555" stroke-width="1"/><path d="M1051 89.4 Q1053.8 87.6 1054.2 91.5" fill="none" stroke="#1c6fa0" stroke-width="1.4"/><rect x="1039" y="97.8" width="16" height="3.7" fill="#1c6fa0"/>
<text x="1059.60" y="98.5" font-size="12.3" fill="#2e2e2e" font-weight="normal" textLength="51.50" lengthAdjust="spacingAndGlyphs" >Shape Fill</text>
<path d="M1115.30 92.30 L1117.80 94.90 L1120.30 92.30" fill="none" stroke="#444" stroke-width="1.1"/>
<path d="M1045.5 121.8 H1040.5 V112.8 H1049" fill="none" stroke="#555" stroke-width="1.1"/><path d="M1045.3 121.6 L1053 113 Q1054.5 111.8 1055 113.3 Q1055.2 114.2 1054.3 115 L1046.8 122.8 L1044.5 123.3 Z" fill="#fff" stroke="#2f8fe0" stroke-width="1.1"/><rect x="1039" y="123" width="16" height="3.7" fill="#2ec66a"/>
<text x="1059.60" y="124.0" font-size="12.3" fill="#2e2e2e" font-weight="normal" textLength="72.30" lengthAdjust="spacingAndGlyphs" >Shape Outline</text>
<path d="M1136.50 117.70 L1139.00 120.30 L1141.50 117.70" fill="none" stroke="#444" stroke-width="1.1"/>
<path d="M1040.3 146 L1045.2 139.4 H1053.5 Q1055 139.6 1054.8 141.5 L1049.8 148.7 Q1049 150 1047.5 150 H1042 Q1040.3 150 1040 148.5 Z" fill="#f4f4f4" stroke="#555" stroke-width="1.1"/><path d="M1040.3 146.2 H1048.4 L1049.8 148.6 Q1049 150 1047.5 150 H1042 Q1040.3 150 1040.1 148.5 Z" fill="#6e6e6e"/><path d="M1048.4 146.2 L1054.5 140" stroke="#555" stroke-width="1"/>
<text x="1059.60" y="149.5" font-size="12.3" fill="#2e2e2e" font-weight="normal" textLength="69.30" lengthAdjust="spacingAndGlyphs" >Shape Effects</text>
<path d="M1133.80 143.70 L1136.30 146.30 L1138.80 143.70" fill="none" stroke="#444" stroke-width="1.1"/>
<text x="948.20" y="171.1" font-size="11" fill="#4a4a4a" font-weight="normal" textLength="38.60" lengthAdjust="spacingAndGlyphs" >Drawing</text>
<path d="M1147.5 171.3 V164.3 H1154.5" fill="none" stroke="#666" stroke-width="1"/><path d="M1150.0 166.8 L1154.5 171.3 M1151.0 171.3 H1154.5 V167.8" fill="none" stroke="#666" stroke-width="1"/>
<circle cx="1181" cy="91.7" r="4.8" fill="none" stroke="#555" stroke-width="1.1"/><path d="M1177.5 95.2 L1171.3 101.4" stroke="#555" stroke-width="1.2"/>
<text x="1190.40" y="98.5" font-size="12.3" fill="#2e2e2e" font-weight="normal" textLength="22.50" lengthAdjust="spacingAndGlyphs" >Find</text>
<path d="M1174.3 116 Q1170.3 118 1171.2 121.3 Q1172.3 123.8 1177 123.8 M1174.5 121.7 L1176.9 123.8 L1174.7 126" fill="none" stroke="#3a98e0" stroke-width="1.3"/>
<text x="1175.80" y="118.8" font-size="10" fill="#c054cc" font-weight="normal" textLength="6.10" lengthAdjust="spacingAndGlyphs" >b</text>
<text x="1179.60" y="127.3" font-size="10" fill="#3a98e0" font-weight="normal" textLength="5.60" lengthAdjust="spacingAndGlyphs" >c</text>
<text x="1190.40" y="124.2" font-size="12.3" fill="#2e2e2e" font-weight="normal" textLength="42.50" lengthAdjust="spacingAndGlyphs" >Replace</text>
<path d="M1245.50 117.90 L1248.00 120.50 L1250.50 117.90" fill="none" stroke="#444" stroke-width="1.1"/>
<path d="M1172.5 137.5 V151.5 L1176 148 L1179 153 L1181 152 L1178.5 147 H1183.3 Z" fill="#fff" stroke="#555" stroke-width="1.1"/>
<text x="1190.40" y="150.1" font-size="12.3" fill="#2e2e2e" font-weight="normal" textLength="32.50" lengthAdjust="spacingAndGlyphs" >Select</text>
<path d="M1227.00 143.90 L1229.50 146.50 L1232.00 143.90" fill="none" stroke="#444" stroke-width="1.1"/>
<text x="1194.80" y="171.7" font-size="11" fill="#4a4a4a" font-weight="normal" textLength="32.60" lengthAdjust="spacingAndGlyphs" >Editing</text>
<rect x="1288.4" y="85.6" width="12" height="22" rx="6" fill="#7dbaf0" stroke="#2d7fc0" stroke-width="1.2"/><path d="M1285.3 101 Q1285.3 111.2 1294.4 111.2 Q1303.5 111.2 1303.5 101 M1294.4 111.2 V115.7" fill="none" stroke="#555" stroke-width="1.1"/>
<text x="1274.60" y="132.5" font-size="12.3" fill="#2e2e2e" font-weight="normal" textLength="39.60" lengthAdjust="spacingAndGlyphs" >Dictate</text>
<path d="M1291.50 142.00 L1294.00 144.60 L1296.50 142.00" fill="none" stroke="#444" stroke-width="1.1"/>
<text x="1281.60" y="171.7" font-size="11" fill="#4a4a4a" font-weight="normal" textLength="24.80" lengthAdjust="spacingAndGlyphs" >Voice</text>
<rect x="1344.3" y="90.2" width="27" height="21" fill="#f7f7f7" stroke="#707070" stroke-width="1.3"/><rect x="1346.5" y="92.4" width="22.6" height="16.6" fill="none" stroke="#9a9a9a" stroke-width="0.9"/><path d="M1346.5 97.2 H1369.1 M1363.1 97.2 V109" stroke="#777" stroke-width="1"/>
<path d="M1347.6 85.2 H1354.3 L1350.8 91.6 H1353.8 L1341.8 104.4 L1346.2 94.8 H1342.4 Z" fill="#fbd38a" stroke="#e8901e" stroke-width="1.1" stroke-linejoin="round"/>
<text x="1333.60" y="131.3" font-size="12.3" fill="#2e2e2e" font-weight="normal" textLength="47.50" lengthAdjust="spacingAndGlyphs" >Designer</text>
<text x="1335.60" y="171.7" font-size="11" fill="#4a4a4a" font-weight="normal" textLength="42.10" lengthAdjust="spacingAndGlyphs" >Designer</text>
<path d="M1509.00 161.75 L1513.50 166.25 L1518.00 161.75" fill="none" stroke="#333" stroke-width="1.3"/>
<text x="15.90" y="199.7" font-size="12" fill="#2e2e2e" font-weight="normal" textLength="50.40" lengthAdjust="spacingAndGlyphs" >AutoSave</text>
<rect x="73.5" y="185" width="42" height="18.3" rx="9.15" fill="#fff" stroke="#555" stroke-width="1"/><circle cx="82.4" cy="194.2" r="7.2" fill="#616161"/>
<text x="95.10" y="199.5" font-size="11" fill="#555" font-weight="normal" textLength="14.30" lengthAdjust="spacingAndGlyphs" >Off</text>
<path d="M129 187.5 H142 L144.7 190.2 V203.5 H129 Z" fill="#e6a8e8" stroke="#a03ab4" stroke-width="1.3"/><rect x="132.5" y="187.8" width="8.5" height="4.6" fill="#fff" stroke="#a03ab4" stroke-width="1"/><rect x="132.5" y="197.5" width="8.5" height="5.8" fill="#fff" stroke="#a03ab4" stroke-width="1"/>
<text x="148.90" y="199.7" font-size="12" fill="#2e2e2e" font-weight="normal" textLength="24.70" lengthAdjust="spacingAndGlyphs" >Save</text>
<path d="M192 190 V195.5 H197.5 M192.3 195.2 Q198 188.5 202.5 192 Q206.5 196 200 203.5" fill="none" stroke="#c4c4c4" stroke-width="1.2"/>
<text x="210.10" y="199.7" font-size="12" fill="#c0c0c0" font-weight="normal" textLength="29.10" lengthAdjust="spacingAndGlyphs" >Undo</text>
<path d="M250.30 192.50 L252.80 195.10 L255.30 192.50" fill="none" stroke="#c0c0c0" stroke-width="1.1"/>
<path d="M271 188.5 Q265.5 191.5 266 196.5 Q267 203 274 203.5 Q281 203 281.7 196 Q281.5 191.5 277.5 189 M271.5 185.5 V191 H266.5" fill="none" stroke="#c4c4c4" stroke-width="1.2"/>
<text x="286.40" y="199.7" font-size="12" fill="#c0c0c0" font-weight="normal" textLength="27.80" lengthAdjust="spacingAndGlyphs" >Redo</text>
<rect x="332" y="188" width="13.5" height="9.5" fill="#fff" stroke="#555" stroke-width="1.1"/><path d="M337 190.5 L341.5 192.7 L337 195 Z" fill="#2aa14a"/><path d="M338.7 197.5 V202 M334 202.5 H343.5" stroke="#555" stroke-width="1.1"/>
<text x="351.30" y="199.7" font-size="12" fill="#2e2e2e" font-weight="normal" textLength="83.70" lengthAdjust="spacingAndGlyphs" >From Beginning</text>
<rect x="449.5" y="188" width="11" height="9" fill="#fff" stroke="#555" stroke-width="1.1"/><line x1="449.5" y1="190.5" x2="460.5" y2="190.5" stroke="#555"/><rect x="454.5" y="195" width="11" height="9" fill="#fff" stroke="#555" stroke-width="1.1"/><line x1="454.5" y1="197.5" x2="465.5" y2="197.5" stroke="#555"/><path d="M451 196 Q450 202 456 202.5 M454 200.5 L456.3 202.5 L454 204.5" fill="none" stroke="#1e8ad6" stroke-width="1.2"/>
<text x="470.00" y="199.7" font-size="12" fill="#2e2e2e" font-weight="normal" textLength="86.90" lengthAdjust="spacingAndGlyphs" >Switch Windows</text>
<path d="M561.50 192.20 L564.00 194.80 L566.50 192.20" fill="none" stroke="#444" stroke-width="1.1"/>
<path d="M583.5 191.7 H590.8" stroke="#444" stroke-width="1"/><path d="M584.20 194.70 L587.20 197.70 L590.20 194.70" fill="none" stroke="#444" stroke-width="1.1"/>
<rect x="285.7" y="211" width="19.5" height="677" rx="7" fill="#f6f6f6"/>
<line x1="305.5" y1="212" x2="305.5" y2="889" stroke="#dedede" stroke-width="1"/>
<rect x="1519" y="211" width="24" height="588" rx="7" fill="#f6f6f6"/>
<path d="M289.5 223.5 L294 216.5 L298.5 223.5 Z" fill="#6b6b6b"/>
<rect x="289.7" y="228" width="8.7" height="556" rx="4.35" fill="#757575"/>
<path d="M289.5 878 L294 885 L298.5 878 Z" fill="#6b6b6b"/>
<path d="M1523 222.8 L1527.5 216 L1532 222.8 Z" fill="#6b6b6b"/>
<rect x="1523" y="228" width="9" height="110" rx="4.5" fill="#757575"/>
<path d="M1522.5 788 L1527 795 L1531.5 788 Z" fill="#6b6b6b"/>
<path d="M1522 808 L1527 801 L1532 808 Z M1522 813 L1527 806 L1532 813 Z" fill="#6b6b6b"/>
<path d="M1522 820 L1527 827 L1532 820 Z M1522 825 L1527 832 L1532 825 Z" fill="#6b6b6b"/>
<rect x="310" y="214" width="15.5" height="15.5" fill="#fff" stroke="#d6d6d6" stroke-width="1"/>
<path d="M314.8 218.2 V224.3 H320.8" fill="none" stroke="#555" stroke-width="1.5"/>
<rect x="398" y="214.5" width="1055" height="14.5" fill="#e6e6e6"/>
<rect x="1117" y="214.5" width="214" height="14.5" fill="#fff"/>
<text x="407.75" y="225.5" font-size="10" fill="#555" text-anchor="middle">9</text><rect x="417.16" y="221.3" width="1" height="1" fill="#a0a0a0"/><rect x="427.06" y="221.3" width="1" height="1" fill="#a0a0a0"/><rect x="436.97" y="221.3" width="1" height="1" fill="#a0a0a0"/><line x1="447.38" y1="219" x2="447.38" y2="224.5" stroke="#999" stroke-width="1"/><rect x="456.78" y="221.3" width="1" height="1" fill="#a0a0a0"/><rect x="466.69" y="221.3" width="1" height="1" fill="#a0a0a0"/><rect x="476.59" y="221.3" width="1" height="1" fill="#a0a0a0"/><text x="487.00" y="225.5" font-size="10" fill="#555" text-anchor="middle">8</text><rect x="496.41" y="221.3" width="1" height="1" fill="#a0a0a0"/><rect x="506.31" y="221.3" width="1" height="1" fill="#a0a0a0"/><rect x="516.22" y="221.3" width="1" height="1" fill="#a0a0a0"/><line x1="526.62" y1="219" x2="526.62" y2="224.5" stroke="#999" stroke-width="1"/><rect x="536.03" y="221.3" width="1" height="1" fill="#a0a0a0"/><rect x="545.94" y="221.3" width="1" height="1" fill="#a0a0a0"/><rect x="555.84" y="221.3" width="1" height="1" fill="#a0a0a0"/><text x="566.25" y="225.5" font-size="10" fill="#555" text-anchor="middle">7</text><rect x="575.66" y="221.3" width="1" height="1" fill="#a0a0a0"/><rect x="585.56" y="221.3" width="1" height="1" fill="#a0a0a0"/><rect x="595.47" y="221.3" width="1" height="1" fill="#a0a0a0"/><line x1="605.88" y1="219" x2="605.88" y2="224.5" stroke="#999" stroke-width="1"/><rect x="615.28" y="221.3" width="1" height="1" fill="#a0a0a0"/><rect x="625.19" y="221.3" width="1" height="1" fill="#a0a0a0"/><rect x="635.09" y="221.3" width="1" height="1" fill="#a0a0a0"/><text x="645.50" y="225.5" font-size="10" fill="#555" text-anchor="middle">6</text><rect x="654.91" y="221.3" width="1" height="1" fill="#a0a0a0"/><rect x="664.81" y="221.3" width="1" height="1" fill="#a0a0a0"/><rect x="674.72" y="221.3" width="1" height="1" fill="#a0a0a0"/><line x1="685.12" y1="219" x2="685.12" y2="224.5" stroke="#999" stroke-width="1"/><rect x="694.53" y="221.3" width="1" height="1" fill="#a0a0a0"/><rect x="704.44" y="221.3" width="1" height="1" fill="#a0a0a0"/><rect x="714.34" y="221.3" width="1" height="1" fill="#a0a0a0"/><text x="724.75" y="225.5" font-size="10" fill="#555" text-anchor="middle">5</text><rect x="734.16" y="221.3" width="1" height="1" fill="#a0a0a0"/><rect x="744.06" y="221.3" width="1" height="1" fill="#a0a0a0"/><rect x="753.97" y="221.3" width="1" height="1" fill="#a0a0a0"/><line x1="764.38" y1="219" x2="764.38" y2="224.5" stroke="#999" stroke-width="1"/><rect x="773.78" y="221.3" width="1" height="1" fill="#a0a0a0"/><rect x="783.69" y="221.3" width="1" height="1" fill="#a0a0a0"/><rect x="793.59" y="221.3" width="1" height="1" fill="#a0a0a0"/><text x="804.00" y="225.5" font-size="10" fill="#555" text-anchor="middle">4</text><rect x="813.41" y="221.3" width="1" height="1" fill="#a0a0a0"/><rect x="823.31" y="221.3" width="1" height="1" fill="#a0a0a0"/><rect x="833.22" y="221.3" width="1" height="1" fill="#a0a0a0"/><line x1="843.62" y1="219" x2="843.62" y2="224.5" stroke="#999" stroke-width="1"/><rect x="853.03" y="221.3" width="1" height="1" fill="#a0a0a0"/><rect x="862.94" y="221.3" width="1" height="1" fill="#a0a0a0"/><rect x="872.84" y="221.3" width="1" height="1" fill="#a0a0a0"/><text x="883.25" y="225.5" font-size="10" fill="#555" text-anchor="middle">3</text><rect x="892.66" y="221.3" width="1" height="1" fill="#a0a0a0"/><rect x="902.56" y="221.3" width="1" height="1" fill="#a0a0a0"/><rect x="912.47" y="221.3" width="1" height="1" fill="#a0a0a0"/><line x1="922.88" y1="219" x2="922.88" y2="224.5" stroke="#999" stroke-width="1"/><rect x="932.28" y="221.3" width="1" height="1" fill="#a0a0a0"/><rect x="942.19" y="221.3" width="1" height="1" fill="#a0a0a0"/><rect x="952.09" y="221.3" width="1" height="1" fill="#a0a0a0"/><text x="962.50" y="225.5" font-size="10" fill="#555" text-anchor="middle">2</text><rect x="971.91" y="221.3" width="1" height="1" fill="#a0a0a0"/><rect x="981.81" y="221.3" width="1" height="1" fill="#a0a0a0"/><rect x="991.72" y="221.3" width="1" height="1" fill="#a0a0a0"/><line x1="1002.12" y1="219" x2="1002.12" y2="224.5" stroke="#999" stroke-width="1"/><rect x="1011.53" y="221.3" width="1" height="1" fill="#a0a0a0"/><rect x="1021.44" y="221.3" width="1" height="1" fill="#a0a0a0"/><rect x="1031.34" y="221.3" width="1" height="1" fill="#a0a0a0"/><text x="1041.75" y="225.5" font-size="10" fill="#555" text-anchor="middle">1</text><rect x="1051.16" y="221.3" width="1" height="1" fill="#a0a0a0"/><rect x="1061.06" y="221.3" width="1" height="1" fill="#a0a0a0"/><rect x="1070.97" y="221.3" width="1" height="1" fill="#a0a0a0"/><line x1="1081.38" y1="219" x2="1081.38" y2="224.5" stroke="#999" stroke-width="1"/><rect x="1090.78" y="221.3" width="1" height="1" fill="#a0a0a0"/><rect x="1100.69" y="221.3" width="1" height="1" fill="#a0a0a0"/><rect x="1110.59" y="221.3" width="1" height="1" fill="#a0a0a0"/><rect x="1130.41" y="221.3" width="1" height="1" fill="#a0a0a0"/><rect x="1140.31" y="221.3" width="1" height="1" fill="#a0a0a0"/><rect x="1150.22" y="221.3" width="1" height="1" fill="#a0a0a0"/><line x1="1160.62" y1="219" x2="1160.62" y2="224.5" stroke="#999" stroke-width="1"/><rect x="1170.03" y="221.3" width="1" height="1" fill="#a0a0a0"/><rect x="1179.94" y="221.3" width="1" height="1" fill="#a0a0a0"/><rect x="1189.84" y="221.3" width="1" height="1" fill="#a0a0a0"/><text x="1200.25" y="225.5" font-size="10" fill="#555" text-anchor="middle">1</text><rect x="1209.66" y="221.3" width="1" height="1" fill="#a0a0a0"/><rect x="1219.56" y="221.3" width="1" height="1" fill="#a0a0a0"/><rect x="1229.47" y="221.3" width="1" height="1" fill="#a0a0a0"/><line x1="1239.88" y1="219" x2="1239.88" y2="224.5" stroke="#999" stroke-width="1"/><rect x="1249.28" y="221.3" width="1" height="1" fill="#a0a0a0"/><rect x="1259.19" y="221.3" width="1" height="1" fill="#a0a0a0"/><rect x="1269.09" y="221.3" width="1" height="1" fill="#a0a0a0"/><text x="1279.50" y="225.5" font-size="10" fill="#555" text-anchor="middle">2</text><rect x="1288.91" y="221.3" width="1" height="1" fill="#a0a0a0"/><rect x="1298.81" y="221.3" width="1" height="1" fill="#a0a0a0"/><rect x="1308.72" y="221.3" width="1" height="1" fill="#a0a0a0"/><line x1="1319.12" y1="219" x2="1319.12" y2="224.5" stroke="#999" stroke-width="1"/><rect x="1328.53" y="221.3" width="1" height="1" fill="#a0a0a0"/><rect x="1338.44" y="221.3" width="1" height="1" fill="#a0a0a0"/><rect x="1348.34" y="221.3" width="1" height="1" fill="#a0a0a0"/><text x="1358.75" y="225.5" font-size="10" fill="#555" text-anchor="middle">3</text><rect x="1368.16" y="221.3" width="1" height="1" fill="#a0a0a0"/><rect x="1378.06" y="221.3" width="1" height="1" fill="#a0a0a0"/><rect x="1387.97" y="221.3" width="1" height="1" fill="#a0a0a0"/><line x1="1398.38" y1="219" x2="1398.38" y2="224.5" stroke="#999" stroke-width="1"/><rect x="1407.78" y="221.3" width="1" height="1" fill="#a0a0a0"/><rect x="1417.69" y="221.3" width="1" height="1" fill="#a0a0a0"/><rect x="1427.59" y="221.3" width="1" height="1" fill="#a0a0a0"/><text x="1438.00" y="225.5" font-size="10" fill="#555" text-anchor="middle">4</text><rect x="1447.41" y="221.3" width="1" height="1" fill="#a0a0a0"/>
<path d="M1117.5 214 H1125.5 V216 L1121.5 221.5 L1125.5 226.5 V234.5 H1117.5 V226.5 L1121.5 221.5 L1117.5 216 Z M1117.5 228.5 H1125.5" fill="#fff" stroke="#777" stroke-width="1"/>
<rect x="1226.5" y="229.5" width="2" height="4.5" fill="#666"/><rect x="1332" y="229.5" width="2" height="4.5" fill="#666"/>
<rect x="310.5" y="246" width="15" height="594" fill="#e6e6e6"/>
<rect x="310.5" y="367" width="15" height="36" fill="#fff"/>
<rect x="317.5" y="256.53" width="1" height="1" fill="#a0a0a0"/><rect x="317.5" y="266.44" width="1" height="1" fill="#a0a0a0"/><rect x="317.5" y="276.34" width="1" height="1" fill="#a0a0a0"/><text x="0" y="0" font-size="10" fill="#555" text-anchor="middle" transform="translate(321.5 286.75) rotate(-90)">1</text><rect x="317.5" y="296.16" width="1" height="1" fill="#a0a0a0"/><rect x="317.5" y="306.06" width="1" height="1" fill="#a0a0a0"/><rect x="317.5" y="315.97" width="1" height="1" fill="#a0a0a0"/><line x1="315" y1="326.38" x2="321" y2="326.38" stroke="#999" stroke-width="1"/><rect x="317.5" y="335.78" width="1" height="1" fill="#a0a0a0"/><rect x="317.5" y="345.69" width="1" height="1" fill="#a0a0a0"/><rect x="317.5" y="355.59" width="1" height="1" fill="#a0a0a0"/><line x1="315" y1="366.00" x2="321" y2="366.00" stroke="#999" stroke-width="1"/><rect x="317.5" y="375.41" width="1" height="1" fill="#a0a0a0"/><rect x="317.5" y="385.31" width="1" height="1" fill="#a0a0a0"/><rect x="317.5" y="395.22" width="1" height="1" fill="#a0a0a0"/><line x1="315" y1="405.62" x2="321" y2="405.62" stroke="#999" stroke-width="1"/><rect x="317.5" y="415.03" width="1" height="1" fill="#a0a0a0"/><rect x="317.5" y="424.94" width="1" height="1" fill="#a0a0a0"/><rect x="317.5" y="434.84" width="1" height="1" fill="#a0a0a0"/><text x="0" y="0" font-size="10" fill="#555" text-anchor="middle" transform="translate(321.5 445.25) rotate(-90)">1</text><rect x="317.5" y="454.66" width="1" height="1" fill="#a0a0a0"/><rect x="317.5" y="464.56" width="1" height="1" fill="#a0a0a0"/><rect x="317.5" y="474.47" width="1" height="1" fill="#a0a0a0"/><line x1="315" y1="484.88" x2="321" y2="484.88" stroke="#999" stroke-width="1"/><rect x="317.5" y="494.28" width="1" height="1" fill="#a0a0a0"/><rect x="317.5" y="504.19" width="1" height="1" fill="#a0a0a0"/><rect x="317.5" y="514.09" width="1" height="1" fill="#a0a0a0"/><text x="0" y="0" font-size="10" fill="#555" text-anchor="middle" transform="translate(321.5 524.50) rotate(-90)">2</text><rect x="317.5" y="533.91" width="1" height="1" fill="#a0a0a0"/><rect x="317.5" y="543.81" width="1" height="1" fill="#a0a0a0"/><rect x="317.5" y="553.72" width="1" height="1" fill="#a0a0a0"/><line x1="315" y1="564.12" x2="321" y2="564.12" stroke="#999" stroke-width="1"/><rect x="317.5" y="573.53" width="1" height="1" fill="#a0a0a0"/><rect x="317.5" y="583.44" width="1" height="1" fill="#a0a0a0"/><rect x="317.5" y="593.34" width="1" height="1" fill="#a0a0a0"/><text x="0" y="0" font-size="10" fill="#555" text-anchor="middle" transform="translate(321.5 603.75) rotate(-90)">3</text><rect x="317.5" y="613.16" width="1" height="1" fill="#a0a0a0"/><rect x="317.5" y="623.06" width="1" height="1" fill="#a0a0a0"/><rect x="317.5" y="632.97" width="1" height="1" fill="#a0a0a0"/><line x1="315" y1="643.38" x2="321" y2="643.38" stroke="#999" stroke-width="1"/><rect x="317.5" y="652.78" width="1" height="1" fill="#a0a0a0"/><rect x="317.5" y="662.69" width="1" height="1" fill="#a0a0a0"/><rect x="317.5" y="672.59" width="1" height="1" fill="#a0a0a0"/><text x="0" y="0" font-size="10" fill="#555" text-anchor="middle" transform="translate(321.5 683.00) rotate(-90)">4</text><rect x="317.5" y="692.41" width="1" height="1" fill="#a0a0a0"/><rect x="317.5" y="702.31" width="1" height="1" fill="#a0a0a0"/><rect x="317.5" y="712.22" width="1" height="1" fill="#a0a0a0"/><line x1="315" y1="722.62" x2="321" y2="722.62" stroke="#999" stroke-width="1"/><rect x="317.5" y="732.03" width="1" height="1" fill="#a0a0a0"/><rect x="317.5" y="741.94" width="1" height="1" fill="#a0a0a0"/><rect x="317.5" y="751.84" width="1" height="1" fill="#a0a0a0"/><text x="0" y="0" font-size="10" fill="#555" text-anchor="middle" transform="translate(321.5 762.25) rotate(-90)">5</text><rect x="317.5" y="771.66" width="1" height="1" fill="#a0a0a0"/><rect x="317.5" y="781.56" width="1" height="1" fill="#a0a0a0"/><rect x="317.5" y="791.47" width="1" height="1" fill="#a0a0a0"/><line x1="315" y1="801.88" x2="321" y2="801.88" stroke="#999" stroke-width="1"/><rect x="317.5" y="811.28" width="1" height="1" fill="#a0a0a0"/><rect x="317.5" y="821.19" width="1" height="1" fill="#a0a0a0"/><rect x="317.5" y="831.09" width="1" height="1" fill="#a0a0a0"/>
<line x1="307" y1="852.5" x2="1536" y2="852.5" stroke="#dcdcdc" stroke-width="1"/>
<text x="316.40" y="874" font-size="14.2" fill="#626262" font-weight="normal" textLength="117.50" lengthAdjust="spacingAndGlyphs" >Click to add notes</text>
<defs>
 <linearGradient id="gG" gradientUnits="userSpaceOnUse" x1="0" y1="371" x2="0" y2="775">
  <stop offset="0" stop-color="#2dcb78"/><stop offset="0.3" stop-color="#2cc77c"/><stop offset="0.6" stop-color="#26ad95"/><stop offset="1" stop-color="#2075a8"/>
 </linearGradient>
 <linearGradient id="gO" gradientUnits="userSpaceOnUse" x1="0" y1="438" x2="0" y2="708">
  <stop offset="0" stop-color="#ff8c00"/><stop offset="0.45" stop-color="#f58300"/><stop offset="1" stop-color="#c86900"/>
 </linearGradient>
 <linearGradient id="gR" gradientUnits="userSpaceOnUse" x1="0" y1="505" x2="0" y2="641">
  <stop offset="0" stop-color="#dc2630"/><stop offset="0.5" stop-color="#d02229"/><stop offset="1" stop-color="#b31c25"/>
 </linearGradient>
 <linearGradient id="gW" gradientUnits="userSpaceOnUse" x1="0" y1="400" x2="0" y2="760">
  <stop offset="0" stop-color="#ffffff"/><stop offset="0.305" stop-color="#ffffff"/><stop offset="0.306" stop-color="#fafafa"/><stop offset="1" stop-color="#f3f3f3"/>
 </linearGradient>
 <filter id="ds" x="-30%" y="-30%" width="160%" height="160%">
  <feDropShadow dx="5" dy="13" stdDeviation="10" flood-color="#000" flood-opacity="0.26"/>
 </filter>
 <filter id="ds2" x="-30%" y="-30%" width="160%" height="160%">
  <feDropShadow dx="5" dy="11" stdDeviation="9" flood-color="#000" flood-opacity="0.16"/>
 </filter>
 <radialGradient id="bl" cx="0.5" cy="0.5" r="0.6">
  <stop offset="0" stop-color="#1390c9"/><stop offset="0.5" stop-color="#0f80b9"/><stop offset="1" stop-color="#0a5d8e"/>
 </radialGradient>
 <g id="tgt">
  <circle cx="727" cy="573" r="201.5" fill="url(#gG)"/>
  <circle cx="727" cy="573" r="167.7" fill="url(#gW)" filter="url(#ds2)"/>
  <circle cx="727" cy="573" r="135" fill="url(#gO)" filter="url(#ds)"/>
  <circle cx="727" cy="573" r="101.3" fill="url(#gW)" filter="url(#ds)"/>
  <circle cx="727" cy="573" r="67.6" fill="url(#gR)" filter="url(#ds)"/>
  <circle cx="727" cy="573" r="34.2" fill="url(#gW)" filter="url(#ds)"/>
  <path d="M525.5 478.3 Q565 492 588 521.8 L586 535 Q550 545 513 536.8 Z" fill="#f6c136"/>
  <path d="M516.2 513.6 L520.8 499.4 L727.9 572.1 A3 3 0 0 1 726.1 577.9 Z" fill="#3e240e"/>
  <circle cx="518.5" cy="506.5" r="8.2" fill="#7a4f1e"/>
 </g>
</defs>
<rect x="34" y="229" width="235" height="133.5" rx="5" fill="#fff" stroke="#c43e1c" stroke-width="2"/>
<g transform="translate(36 231) scale(0.21875) translate(-398 -245)"><rect x="398" y="245" width="1056" height="594" fill="#fff"/><text x="450.60" y="313.8" font-size="37.3" fill="#262626" font-weight="normal" textLength="821.80" lengthAdjust="spacingAndGlyphs" >Best Company Objective Infographic Slide – 6 Goals</text><use href="#tgt"/><circle cx="1063.4" cy="384.0" r="27.6" fill="#d9d9d9"/><text x="1063.4" y="394.0" font-size="28" font-weight="bold" fill="#2e2e2e" text-anchor="middle">1</text><text x="1120.60" y="381.0" font-size="15.6" fill="#707070" font-weight="normal" textLength="182.10" lengthAdjust="spacingAndGlyphs" >This is a sample text. Insert</text><text x="1120.60" y="399.2" font-size="15.6" fill="#707070" font-weight="normal" textLength="152.80" lengthAdjust="spacingAndGlyphs" >your desired text here.</text><circle cx="1063.4" cy="459.0" r="27.6" fill="#d9d9d9"/><text x="1063.4" y="469.0" font-size="28" font-weight="bold" fill="#2e2e2e" text-anchor="middle">2</text><text x="1114.40" y="456.0" font-size="15.6" fill="#707070" font-weight="normal" textLength="182.10" lengthAdjust="spacingAndGlyphs" >This is a sample text. Insert</text><text x="1114.40" y="474.2" font-size="15.6" fill="#707070" font-weight="normal" textLength="152.80" lengthAdjust="spacingAndGlyphs" >your desired text here.</text><circle cx="1063.4" cy="534.0" r="27.6" fill="#d9d9d9"/><text x="1063.4" y="544.0" font-size="28" font-weight="bold" fill="#2e2e2e" text-anchor="middle">3</text><text x="1114.40" y="531.0" font-size="15.6" fill="#707070" font-weight="normal" textLength="182.10" lengthAdjust="spacingAndGlyphs" >This is a sample text. Insert</text><text x="1114.40" y="549.2" font-size="15.6" fill="#707070" font-weight="normal" textLength="152.80" lengthAdjust="spacingAndGlyphs" >your desired text here.</text><circle cx="1063.4" cy="609.0" r="27.6" fill="#d9d9d9"/><text x="1063.4" y="619.0" font-size="28" font-weight="bold" fill="#2e2e2e" text-anchor="middle">4</text><text x="1114.40" y="606.0" font-size="15.6" fill="#707070" font-weight="normal" textLength="182.10" lengthAdjust="spacingAndGlyphs" >This is a sample text. Insert</text><text x="1114.40" y="624.2" font-size="15.6" fill="#707070" font-weight="normal" textLength="152.80" lengthAdjust="spacingAndGlyphs" >your desired text here.</text><circle cx="1063.4" cy="684.0" r="27.6" fill="#d9d9d9"/><text x="1063.4" y="694.0" font-size="28" font-weight="bold" fill="#2e2e2e" text-anchor="middle">5</text><text x="1114.40" y="681.0" font-size="15.6" fill="#707070" font-weight="normal" textLength="182.10" lengthAdjust="spacingAndGlyphs" >This is a sample text. Insert</text><text x="1114.40" y="699.2" font-size="15.6" fill="#707070" font-weight="normal" textLength="152.80" lengthAdjust="spacingAndGlyphs" >your desired text here.</text><circle cx="1063.4" cy="759.0" r="27.6" fill="#d9d9d9"/><text x="1063.4" y="769.0" font-size="28" font-weight="bold" fill="#2e2e2e" text-anchor="middle">6</text><text x="1120.60" y="756.0" font-size="15.6" fill="#707070" font-weight="normal" textLength="182.10" lengthAdjust="spacingAndGlyphs" >This is a sample text. Insert</text><text x="1120.60" y="774.2" font-size="15.6" fill="#707070" font-weight="normal" textLength="152.80" lengthAdjust="spacingAndGlyphs" >your desired text here.</text></g>
<rect x="35.5" y="382.0" width="232" height="131" rx="4" fill="#fff" stroke="#d0d0d0" stroke-width="1"/>
<g transform="translate(36 382.5) scale(0.21875) translate(-398 -245)"><rect x="398" y="245" width="1056" height="594" fill="#fff"/><text x="450.60" y="313.8" font-size="37.3" fill="#262626" font-weight="normal" textLength="821.80" lengthAdjust="spacingAndGlyphs" >Best Company Objective Infographic Slide – 5 Goals</text><use href="#tgt"/><circle cx="1063.4" cy="421.5" r="27.6" fill="#d9d9d9"/><text x="1063.4" y="431.5" font-size="28" font-weight="bold" fill="#2e2e2e" text-anchor="middle">1</text><text x="1114.40" y="418.5" font-size="15.6" fill="#707070" font-weight="normal" textLength="182.10" lengthAdjust="spacingAndGlyphs" >This is a sample text. Insert</text><text x="1114.40" y="436.7" font-size="15.6" fill="#707070" font-weight="normal" textLength="152.80" lengthAdjust="spacingAndGlyphs" >your desired text here.</text><circle cx="1063.4" cy="496.5" r="27.6" fill="#d9d9d9"/><text x="1063.4" y="506.5" font-size="28" font-weight="bold" fill="#2e2e2e" text-anchor="middle">2</text><text x="1114.40" y="493.5" font-size="15.6" fill="#707070" font-weight="normal" textLength="182.10" lengthAdjust="spacingAndGlyphs" >This is a sample text. Insert</text><text x="1114.40" y="511.7" font-size="15.6" fill="#707070" font-weight="normal" textLength="152.80" lengthAdjust="spacingAndGlyphs" >your desired text here.</text><circle cx="1063.4" cy="571.5" r="27.6" fill="#d9d9d9"/><text x="1063.4" y="581.5" font-size="28" font-weight="bold" fill="#2e2e2e" text-anchor="middle">3</text><text x="1114.40" y="568.5" font-size="15.6" fill="#707070" font-weight="normal" textLength="182.10" lengthAdjust="spacingAndGlyphs" >This is a sample text. Insert</text><text x="1114.40" y="586.7" font-size="15.6" fill="#707070" font-weight="normal" textLength="152.80" lengthAdjust="spacingAndGlyphs" >your desired text here.</text><circle cx="1063.4" cy="646.5" r="27.6" fill="#d9d9d9"/><text x="1063.4" y="656.5" font-size="28" font-weight="bold" fill="#2e2e2e" text-anchor="middle">4</text><text x="1114.40" y="643.5" font-size="15.6" fill="#707070" font-weight="normal" textLength="182.10" lengthAdjust="spacingAndGlyphs" >This is a sample text. Insert</text><text x="1114.40" y="661.7" font-size="15.6" fill="#707070" font-weight="normal" textLength="152.80" lengthAdjust="spacingAndGlyphs" >your desired text here.</text><circle cx="1063.4" cy="721.5" r="27.6" fill="#d9d9d9"/><text x="1063.4" y="731.5" font-size="28" font-weight="bold" fill="#2e2e2e" text-anchor="middle">5</text><text x="1114.40" y="718.5" font-size="15.6" fill="#707070" font-weight="normal" textLength="182.10" lengthAdjust="spacingAndGlyphs" >This is a sample text. Insert</text><text x="1114.40" y="736.7" font-size="15.6" fill="#707070" font-weight="normal" textLength="152.80" lengthAdjust="spacingAndGlyphs" >your desired text here.</text></g>
<rect x="35.5" y="533.0" width="232" height="131" rx="4" fill="#fff" stroke="#d0d0d0" stroke-width="1"/>
<g transform="translate(36 533.5) scale(0.21875) translate(-398 -245)"><rect x="398" y="245" width="1056" height="594" fill="#fff"/><text x="450.60" y="313.8" font-size="37.3" fill="#262626" font-weight="normal" textLength="821.80" lengthAdjust="spacingAndGlyphs" >Best Company Objective Infographic Slide – 4 Goals</text><use href="#tgt"/><circle cx="1063.4" cy="459.0" r="27.6" fill="#d9d9d9"/><text x="1063.4" y="469.0" font-size="28" font-weight="bold" fill="#2e2e2e" text-anchor="middle">1</text><text x="1114.40" y="456.0" font-size="15.6" fill="#707070" font-weight="normal" textLength="182.10" lengthAdjust="spacingAndGlyphs" >This is a sample text. Insert</text><text x="1114.40" y="474.2" font-size="15.6" fill="#707070" font-weight="normal" textLength="152.80" lengthAdjust="spacingAndGlyphs" >your desired text here.</text><circle cx="1063.4" cy="534.0" r="27.6" fill="#d9d9d9"/><text x="1063.4" y="544.0" font-size="28" font-weight="bold" fill="#2e2e2e" text-anchor="middle">2</text><text x="1114.40" y="531.0" font-size="15.6" fill="#707070" font-weight="normal" textLength="182.10" lengthAdjust="spacingAndGlyphs" >This is a sample text. Insert</text><text x="1114.40" y="549.2" font-size="15.6" fill="#707070" font-weight="normal" textLength="152.80" lengthAdjust="spacingAndGlyphs" >your desired text here.</text><circle cx="1063.4" cy="609.0" r="27.6" fill="#d9d9d9"/><text x="1063.4" y="619.0" font-size="28" font-weight="bold" fill="#2e2e2e" text-anchor="middle">3</text><text x="1114.40" y="606.0" font-size="15.6" fill="#707070" font-weight="normal" textLength="182.10" lengthAdjust="spacingAndGlyphs" >This is a sample text. Insert</text><text x="1114.40" y="624.2" font-size="15.6" fill="#707070" font-weight="normal" textLength="152.80" lengthAdjust="spacingAndGlyphs" >your desired text here.</text><circle cx="1063.4" cy="684.0" r="27.6" fill="#d9d9d9"/><text x="1063.4" y="694.0" font-size="28" font-weight="bold" fill="#2e2e2e" text-anchor="middle">4</text><text x="1114.40" y="681.0" font-size="15.6" fill="#707070" font-weight="normal" textLength="182.10" lengthAdjust="spacingAndGlyphs" >This is a sample text. Insert</text><text x="1114.40" y="699.2" font-size="15.6" fill="#707070" font-weight="normal" textLength="152.80" lengthAdjust="spacingAndGlyphs" >your desired text here.</text></g>
<rect x="35.5" y="684.0" width="232" height="131" rx="4" fill="#fff" stroke="#d0d0d0" stroke-width="1"/>
<g transform="translate(36 684.5) scale(0.21875) translate(-398 -245)"><rect x="398" y="245" width="1056" height="594" fill="#fff"/><text x="450.60" y="313.8" font-size="37.3" fill="#262626" font-weight="normal" textLength="821.80" lengthAdjust="spacingAndGlyphs" >Best Company Objective Infographic Slide – 3 Goals</text><use href="#tgt"/><circle cx="1063.4" cy="496.5" r="27.6" fill="#d9d9d9"/><text x="1063.4" y="506.5" font-size="28" font-weight="bold" fill="#2e2e2e" text-anchor="middle">1</text><text x="1114.40" y="493.5" font-size="15.6" fill="#707070" font-weight="normal" textLength="182.10" lengthAdjust="spacingAndGlyphs" >This is a sample text. Insert</text><text x="1114.40" y="511.7" font-size="15.6" fill="#707070" font-weight="normal" textLength="152.80" lengthAdjust="spacingAndGlyphs" >your desired text here.</text><circle cx="1063.4" cy="571.5" r="27.6" fill="#d9d9d9"/><text x="1063.4" y="581.5" font-size="28" font-weight="bold" fill="#2e2e2e" text-anchor="middle">2</text><text x="1114.40" y="568.5" font-size="15.6" fill="#707070" font-weight="normal" textLength="182.10" lengthAdjust="spacingAndGlyphs" >This is a sample text. Insert</text><text x="1114.40" y="586.7" font-size="15.6" fill="#707070" font-weight="normal" textLength="152.80" lengthAdjust="spacingAndGlyphs" >your desired text here.</text><circle cx="1063.4" cy="646.5" r="27.6" fill="#d9d9d9"/><text x="1063.4" y="656.5" font-size="28" font-weight="bold" fill="#2e2e2e" text-anchor="middle">3</text><text x="1114.40" y="643.5" font-size="15.6" fill="#707070" font-weight="normal" textLength="182.10" lengthAdjust="spacingAndGlyphs" >This is a sample text. Insert</text><text x="1114.40" y="661.7" font-size="15.6" fill="#707070" font-weight="normal" textLength="152.80" lengthAdjust="spacingAndGlyphs" >your desired text here.</text></g>
<clipPath id="c5"><rect x="35" y="834" width="233" height="55.7"/></clipPath>
<clipPath id="c5r"><rect x="36" y="835.6" width="230.5" height="131" rx="4"/></clipPath>
<g clip-path="url(#c5)"><g clip-path="url(#c5r)"><rect x="36" y="835" width="231" height="60" fill="#085a84"/>
<circle cx="151.3" cy="888" r="135" fill="#095d88"/>
<circle cx="151.3" cy="888" r="125" fill="#0a6593"/>
<circle cx="151.3" cy="888" r="115" fill="#0b6c9b"/>
<circle cx="151.3" cy="888" r="105" fill="#0c73a3"/>
<circle cx="151.3" cy="888" r="95" fill="#0e7aaa"/>
<circle cx="151.3" cy="888" r="85" fill="#0f7fb0"/>
<circle cx="151.3" cy="888" r="75" fill="#1183b3"/>
</g></g>
<text x="12.80" y="240.3" font-size="14.5" fill="#c43e1c" font-weight="normal" textLength="5.90" lengthAdjust="spacingAndGlyphs" >1</text>
<text x="11.90" y="391.4" font-size="14.5" fill="#4a4a4a" font-weight="normal" textLength="7.80" lengthAdjust="spacingAndGlyphs" >2</text>
<text x="11.70" y="542.6" font-size="14.5" fill="#4a4a4a" font-weight="normal" textLength="8.00" lengthAdjust="spacingAndGlyphs" >3</text>
<text x="11.40" y="693.8" font-size="14.5" fill="#4a4a4a" font-weight="normal" textLength="8.50" lengthAdjust="spacingAndGlyphs" >4</text>
<text x="11.70" y="844.9" font-size="14.5" fill="#4a4a4a" font-weight="normal" textLength="8.00" lengthAdjust="spacingAndGlyphs" >5</text>
<rect x="397.5" y="245.5" width="1056.5" height="594.8" fill="#fff" stroke="#d4d4d4" stroke-width="1"/>
<text x="450.60" y="313.8" font-size="37.3" fill="#262626" font-weight="normal" textLength="821.80" lengthAdjust="spacingAndGlyphs" >Best Company Objective Infographic Slide – 6 Goals</text>
<use href="#tgt"/>
<circle cx="1063.4" cy="384.7" r="27.6" fill="#d9d9d9"/>
<text x="1063.4" y="394.5" font-size="28" font-weight="bold" fill="#2e2e2e" text-anchor="middle">1</text>
<rect x="1120.2" y="366.2" width="186.3" height="18.2" fill="#b9b9b9"/><rect x="1120.2" y="384.4" width="161" height="18.1" fill="#b9b9b9"/>
<text x="1120.60" y="381.7" font-size="15.6" fill="#555" font-weight="normal" textLength="182.10" lengthAdjust="spacingAndGlyphs" >This is a sample text. Insert</text>
<text x="1120.60" y="399.9" font-size="15.6" fill="#555" font-weight="normal" textLength="152.80" lengthAdjust="spacingAndGlyphs" >your desired text here.</text>
<circle cx="1063.4" cy="459.5" r="27.6" fill="#d9d9d9"/>
<text x="1063.4" y="469.3" font-size="28" font-weight="bold" fill="#2e2e2e" text-anchor="middle">2</text>
<text x="1114.40" y="456.5" font-size="15.6" fill="#4a4a4a" font-weight="normal" textLength="182.10" lengthAdjust="spacingAndGlyphs" >This is a sample text. Insert</text>
<text x="1114.40" y="474.7" font-size="15.6" fill="#4a4a4a" font-weight="normal" textLength="152.80" lengthAdjust="spacingAndGlyphs" >your desired text here.</text>
<circle cx="1063.4" cy="534.5" r="27.6" fill="#d9d9d9"/>
<text x="1063.4" y="544.3" font-size="28" font-weight="bold" fill="#2e2e2e" text-anchor="middle">3</text>
<text x="1113.90" y="531.5" font-size="15.6" fill="#4a4a4a" font-weight="normal" textLength="182.10" lengthAdjust="spacingAndGlyphs" >This is a sample text. Insert</text>
<text x="1113.90" y="549.7" font-size="15.6" fill="#4a4a4a" font-weight="normal" textLength="152.80" lengthAdjust="spacingAndGlyphs" >your desired text here.</text>
<circle cx="1063.4" cy="609.5" r="27.6" fill="#d9d9d9"/>
<text x="1063.4" y="619.3" font-size="28" font-weight="bold" fill="#2e2e2e" text-anchor="middle">4</text>
<text x="1113.90" y="606.5" font-size="15.6" fill="#4a4a4a" font-weight="normal" textLength="182.10" lengthAdjust="spacingAndGlyphs" >This is a sample text. Insert</text>
<text x="1113.90" y="624.7" font-size="15.6" fill="#4a4a4a" font-weight="normal" textLength="152.80" lengthAdjust="spacingAndGlyphs" >your desired text here.</text>
<circle cx="1063.4" cy="684.5" r="27.6" fill="#d9d9d9"/>
<text x="1063.4" y="694.3" font-size="28" font-weight="bold" fill="#2e2e2e" text-anchor="middle">5</text>
<text x="1114.90" y="681.5" font-size="15.6" fill="#4a4a4a" font-weight="normal" textLength="182.10" lengthAdjust="spacingAndGlyphs" >This is a sample text. Insert</text>
<text x="1114.90" y="699.7" font-size="15.6" fill="#4a4a4a" font-weight="normal" textLength="152.80" lengthAdjust="spacingAndGlyphs" >your desired text here.</text>
<circle cx="1063.4" cy="759.5" r="27.6" fill="#d9d9d9"/>
<text x="1063.4" y="769.3" font-size="28" font-weight="bold" fill="#2e2e2e" text-anchor="middle">6</text>
<text x="1120.60" y="756.5" font-size="15.6" fill="#4a4a4a" font-weight="normal" textLength="182.10" lengthAdjust="spacingAndGlyphs" >This is a sample text. Insert</text>
<text x="1120.60" y="774.7" font-size="15.6" fill="#4a4a4a" font-weight="normal" textLength="152.80" lengthAdjust="spacingAndGlyphs" >your desired text here.</text>
<rect x="1120.5" y="358.7" width="210.5" height="51.8" fill="none" stroke="#808080" stroke-width="0.8" stroke-dasharray="1.5 1.5"/>
<line x1="1226" y1="335.5" x2="1226" y2="354" stroke="#b4b4b4" stroke-width="1.1"/>
<g fill="#fff" stroke="#6a6a6a" stroke-width="1.8"><circle cx="1120.5" cy="358.7" r="4.5"/><circle cx="1225.8" cy="358.7" r="4.5"/><circle cx="1331" cy="358.7" r="4.5"/><circle cx="1120.5" cy="384.6" r="4.5"/><circle cx="1331" cy="384.6" r="4.5"/><circle cx="1120.5" cy="410.5" r="4.5"/><circle cx="1225.8" cy="410.5" r="4.5"/><circle cx="1331" cy="410.5" r="4.5"/></g>
<path d="M1230 331.9 A8 8 0 1 1 1233.9 323.6" fill="none" stroke="#686868" stroke-width="5.6"/><path d="M1230 331.9 A8 8 0 1 1 1233.9 323.6" fill="none" stroke="#fff" stroke-width="2.2"/><path d="M1229.3 323.8 H1240.8 L1234.8 330.8 Z" fill="#fff" stroke="#686868" stroke-width="1.3" stroke-linejoin="round"/>
<rect x="0" y="890" width="1536" height="21" fill="#f4f4f4"/>
<text x="7.80" y="905.6" font-size="11" fill="#555555" font-weight="normal" textLength="53.10" lengthAdjust="spacingAndGlyphs" >Slide 1 of 5</text>
<text x="93.30" y="905.6" font-size="11" fill="#555555" font-weight="normal" textLength="104.40" lengthAdjust="spacingAndGlyphs" >English (United States)</text>
<circle cx="220.5" cy="896.6" r="1.9" fill="none" stroke="#444" stroke-width="1.2"/><path d="M216.5 896.5 Q213.8 897.8 215.8 899.5 Q217 900.3 218.3 900.5 L218 904 L216.6 906.8 Q216.6 908.6 218.4 908.3 L220.3 904.6 L221.5 906 M224.5 896.5 Q227 897.8 225.2 899.5 Q224 900.3 222.9 900.5 V901.6" fill="none" stroke="#444" stroke-width="1.2" stroke-linejoin="round"/><path d="M222.3 902 L228.6 908.3 M228.6 901.8 L222.3 908.1" stroke="#444" stroke-width="1.1"/>
<text x="231.60" y="905.6" font-size="11" fill="#555555" font-weight="normal" textLength="111.00" lengthAdjust="spacingAndGlyphs" >Accessibility: Investigate</text>
<path d="M1008.2 901 H1023.9 M1008.2 904.8 H1023.9 M1008.2 908.8 H1023.9" stroke="#4a4a4a" stroke-width="1.3"/><path d="M1012.8 897.6 L1016 894.4 L1019.2 897.6" fill="none" stroke="#333" stroke-width="1.4"/>
<text x="1025.10" y="905.6" font-size="11" fill="#555555" font-weight="normal" textLength="28.60" lengthAdjust="spacingAndGlyphs" >Notes</text>
<path d="M1075 904 H1071.3 V895.8 H1084 V902" fill="none" stroke="#555" stroke-width="1.2"/><circle cx="1080" cy="904" r="3.6" fill="#444"/><circle cx="1080" cy="904" r="2.3" fill="#f4f4f4"/><circle cx="1080" cy="904" r="1" fill="#333"/><g stroke="#444" stroke-width="1.4"><path d="M1080 899.6 V900.8 M1080 907.2 V908.4 M1076.2 901.8 L1077.2 902.4 M1082.8 905.6 L1083.8 906.2 M1076.2 906.2 L1077.2 905.6 M1082.8 902.4 L1083.8 901.8"/></g>
<text x="1086.60" y="905.6" font-size="11" fill="#555555" font-weight="normal" textLength="74.40" lengthAdjust="spacingAndGlyphs" >Display Settings</text>
<rect x="1180.2" y="890.3" width="39.8" height="20.7" fill="#e1e1e1"/>
<rect x="1193" y="894" width="14" height="11.5" fill="none" stroke="#444" stroke-width="1.2"/><path d="M1196.5 894.5 V905 M1196.5 897 H1204 V902.5 H1196.5" fill="none" stroke="#444" stroke-width="1.1"/>
<g fill="none" stroke="#555" stroke-width="1.1"><rect x="1233" y="894.3" width="5.5" height="4.5"/><rect x="1241" y="894.3" width="5.5" height="4.5"/><rect x="1233" y="901.3" width="5.5" height="4.5"/><rect x="1241" y="901.3" width="5.5" height="4.5"/></g>
<path d="M1273 895 Q1276.5 893.5 1279.7 895 Q1283 893.5 1286.5 895 V905.5 Q1283 904 1279.7 905.5 Q1276.5 904 1273 905.5 Z M1279.7 895 V905.5" fill="none" stroke="#555" stroke-width="1.1"/>
<rect x="1313" y="894" width="13" height="7.5" fill="none" stroke="#555" stroke-width="1.1"/><path d="M1319.5 901.5 V906 M1316.5 906.5 H1322.5" stroke="#555" stroke-width="1.1"/>
<path d="M1346 900.5 H1352.5" stroke="#555" stroke-width="1.1"/>
<line x1="1358" y1="900.5" x2="1458.5" y2="900.5" stroke="#888" stroke-width="1"/><rect x="1397.7" y="895" width="4.7" height="11" fill="#555"/><line x1="1408.4" y1="898" x2="1408.4" y2="903" stroke="#888"/>
<path d="M1463 900.5 H1470.5 M1466.75 896.75 V904.25" stroke="#555" stroke-width="1.1"/>
<text x="1483.60" y="905.6" font-size="11" fill="#555555" font-weight="normal" textLength="19.80" lengthAdjust="spacingAndGlyphs" >83%</text>
<rect x="1520.5" y="896.5" width="6.5" height="8.5" fill="none" stroke="#555" stroke-width="1.1"/><path d="M1521.5 893.5 L1523.75 891.3 L1526 893.5 M1521.5 907.5 L1523.75 909.7 L1526 907.5 M1518 898.5 L1516 900.75 L1518 903 M1529.5 898.5 L1531.5 900.75 L1529.5 903" fill="none" stroke="#555" stroke-width="1"/>
</svg>
</body></html>
